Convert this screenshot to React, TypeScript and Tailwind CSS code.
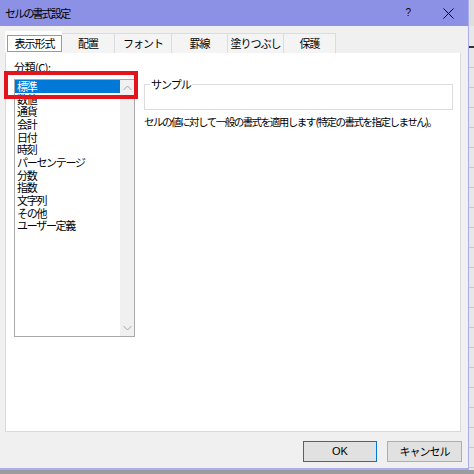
import React from "react";

const items = [
  "標準",
  "数値",
  "通貨",
  "会計",
  "日付",
  "時刻",
  "パーセンテージ",
  "分数",
  "指数",
  "文字列",
  "その他",
  "ユーザー定義",
];

const tabs = ["配置", "フォント", "罫線", "塗りつぶし", "保護"];
const tabWidths = ["w-[53px]", "w-[57px]", "w-[56px]", "w-[56px]", "w-[52px]"];

export default function App() {
  return (
    <div className="relative flex h-[474px] w-[474px] flex-col overflow-hidden bg-[#9c9c9c] font-['Noto_Sans_CJK_JP','Noto_Sans',sans-serif] text-[11px] leading-none tracking-[-1px] text-black">
      <div className="flex h-[470px]">
        {/* Dialog */}
        <div className="flex h-[470px] w-[469px] shrink-0 flex-col border-r border-b-2 border-[#a9acf0] bg-[#f0f0f0]">
          {/* Title bar */}
          <div className="flex h-[26px] items-center bg-[#8c91e6] pl-[5px]">
            <span className="text-[11px] tracking-[-1.8px]">セルの書式設定</span>
            <span className="ml-auto mr-[32px] text-[10px] font-['Liberation_Sans',sans-serif] tracking-normal">?</span>
            <svg width="11" height="11" viewBox="0 0 11 11" className="mr-[14px]">
              <path d="M0.5 0.5 L10.5 10.5 M10.5 0.5 L0.5 10.5" stroke="#000" strokeWidth="1" />
            </svg>
          </div>

          {/* Body */}
          <div className="flex flex-1 flex-col pl-[5px] pr-[7px] pt-[5px]">
            {/* Tabs */}
            <div className="flex h-[22px] items-end">
              <div className="flex h-[22px] w-[57px] items-start bg-white pl-[2px] pt-[4px]">
                <div className="flex h-[17px] w-[55px] items-center justify-center border border-[#9a9a9a]">
                  表示形式
                </div>
              </div>
              {tabs.map((t, i) => (
                <div
                  key={t}
                  className={`flex h-[20px] ${tabWidths[i]} items-center justify-center border-t border-r border-[#dcdcdc] bg-[#f4f4f4]`}
                >
                  {t}
                </div>
              ))}
            </div>

            {/* Panel */}
            <div className="flex h-[379px] border border-t-0 border-[#d9d9d9] bg-white pl-[8px] pr-[7px]">
              {/* Left column */}
              <div className="flex w-[121px] shrink-0 flex-col pt-[9px]">
                <div className="h-[17px] tracking-[-0.5px]">分類(C):</div>
                <div className="flex h-[258px] border border-[#a9a9a9]">
                  <div className="flex flex-1 flex-col">
                    {items.map((it, i) => (
                      <div
                        key={it}
                        className={`flex h-[12.7px] items-center pl-[2px] tracking-[-1.3px] ${
                          i === 0 ? "bg-[#0078d7] text-white" : ""
                        }`}
                      >
                        {it}
                      </div>
                    ))}
                  </div>
                  <div className="flex w-[14px] flex-col items-center justify-between bg-[#f0f0f0] py-[5px]">
                    <svg width="9" height="6" viewBox="0 0 9 6">
                      <path d="M0.5 5 L4.5 1 L8.5 5" stroke="#a6a6a6" strokeWidth="1" fill="none" />
                    </svg>
                    <svg width="9" height="6" viewBox="0 0 9 6">
                      <path d="M0.5 1 L4.5 5 L8.5 1" stroke="#a6a6a6" strokeWidth="1" fill="none" />
                    </svg>
                  </div>
                </div>
              </div>

              {/* Right column */}
              <div className="ml-[9px] flex min-w-0 flex-1 flex-col pt-[25px]">
                <fieldset className="h-[32px] border border-[#dcdcdc]">
                  <legend className="ml-[5px] px-[1px] leading-[12px]">サンプル</legend>
                </fieldset>
                <div className="mt-[7px] whitespace-nowrap text-[10.5px] tracking-[-1.5px]">
                  セルの値に対して一般の書式を適用します (特定の書式を指定しません)。
                </div>
              </div>
            </div>

            {/* Footer */}
            <div className="mr-[-1px] mt-[9px] flex justify-end gap-[10px]">
              <button className="flex h-[21px] w-[74px] items-center justify-center border border-[#0078d7] bg-[#e1e1e1] font-['Liberation_Sans',sans-serif] tracking-normal">
                OK
              </button>
              <button className="flex h-[21px] w-[75px] items-center justify-center border border-[#adadad] bg-[#e1e1e1]">
                キャンセル
              </button>
            </div>
          </div>
        </div>

        {/* Excel background strip */}
        <div className="flex flex-1 flex-col bg-[#e8e8e8]">
          <div className="h-[26px] bg-[#dedede]" />
          <div className="h-[22px] border-b-2 border-[#333]" />
          {Array.from({ length: 21 }).map((_, i) => (
            <div key={i} className="h-[20px] border-b border-[#c9c9c9]" />
          ))}
        </div>
      </div>

      {/* Red highlight overlay */}
      <div className="pointer-events-none absolute left-[4px] top-[71px] h-[28px] w-[134px] border-4 border-[#e3141c]" />
    </div>
  );
}
